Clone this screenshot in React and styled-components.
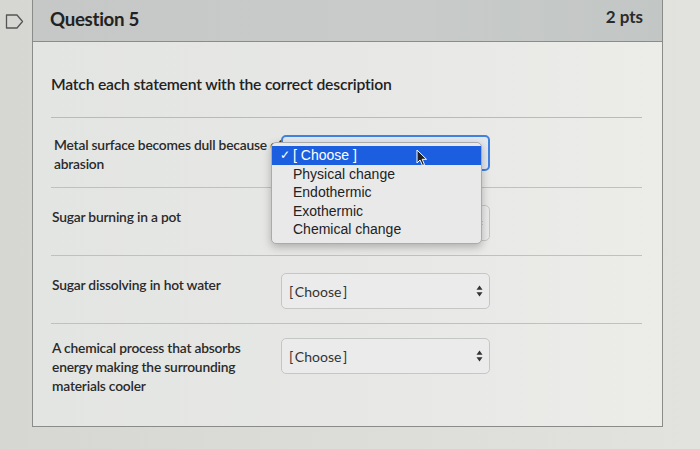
import React from "react";
import styled, { createGlobalStyle } from "styled-components";

const Global = createGlobalStyle`
  html, body { margin: 0; padding: 0; }
  body {
    width: 700px; height: 449px; overflow: hidden;
    background: linear-gradient(90deg, #d6d6d2 0%, #dcdcd9 50%, #e2e2df 100%);
    font-family: Lato, "Open Sans", sans-serif;
    color: #2d3b45;
  }
`;

const Page = styled.div`
  display: flex;
  height: 449px;
`;

const Gutter = styled.div`
  width: 32px;
  flex: none;
  padding-top: 13px;
  padding-left: 5px;
  box-sizing: border-box;
`;

const Card = styled.div`
  width: 631px;
  height: 427px;
  box-sizing: border-box;
  border-left: 1px solid #8a8c8a;
  border-right: 1px solid #8a8c8a;
  border-bottom: 1px solid #8a8c8a;
  background: linear-gradient(90deg, #e3e5e3 0%, #e7e8e6 50%, #ecece9 100%);
  display: flex;
  flex-direction: column;
  position: relative;
`;

const Header = styled.div`
  height: 42px;
  box-sizing: border-box;
  background: linear-gradient(90deg, #c5c8c7 0%, #c8cbca 60%, #c2c6c5 100%);
  border-bottom: 1px solid #8a8c8a;
  display: flex;
  align-items: center;
  justify-content: space-between;
  padding: 0 19px 4px 17px;
`;

const Title = styled.div`
  font-size: 18.7px;
  font-weight: 700;
  color: #222;
  letter-spacing: -0.3px;
`;

const Points = styled.div`
  font-size: 17px;
  font-weight: 700;
  color: #2a2a2a;
  margin-top: -4px;
`;

const Body = styled.div`
  padding: 0 20px 0 18px;
  display: flex;
  flex-direction: column;
`;

const Prompt = styled.div`
  font-size: 15.7px;
  font-weight: 600;
  color: #222;
  padding: 33px 0 24px;
  border-bottom: 1px solid #b9bbb9;
  line-height: 18px;
  letter-spacing: -0.2px;
`;

const Row = styled.div`
  display: flex;
  align-items: flex-start;
  padding: ${p => (p.$last ? "14px 0 0" : "17px 0 14px")};
  border-bottom: ${p => (p.$last ? "none" : "1px solid #bfc1bf")};
`;

const Statement = styled.div`
  width: 230px;
  flex: none;
  font-size: 13.8px;
  font-weight: 600;
  line-height: 19px;
  color: #2a2a2a;
  letter-spacing: -0.2px;
  padding-top: ${p => p.$pt || 0}px;
  padding-left: ${p => p.$pl || 1}px;
  padding-right: 6px;
  box-sizing: border-box;
  white-space: ${p => (p.$nowrap ? "nowrap" : "normal")};
`;

const Select = styled.div`
  width: 209px;
  height: 36px;
  box-sizing: border-box;
  border: ${p => (p.$focus ? "2px solid #3f83e0" : "1px solid #c5c7c5")};
  border-radius: 5px;
  background: ${p => (p.$focus ? "#e4e8ee" : "#eaebea")};
  display: flex;
  align-items: center;
  justify-content: space-between;
  padding: 0 6px 0 7px;
  font-size: 14px;
  color: #333;
  word-spacing: -2px;
`;

const Arrow = () => (
  <svg width="7" height="12" viewBox="0 0 7 12">
    <path d="M3.5 0.5 L6.5 4.8 H0.5 Z" fill="#333" />
    <path d="M3.5 11.5 L6.5 7.2 H0.5 Z" fill="#333" />
  </svg>
);

const Menu = styled.div`
  position: absolute;
  left: 238px;
  top: 142px;
  width: 211px;
  box-sizing: border-box;
  padding: 3px 0 4px;
  background: #e9e9ea;
  border: 1px solid #a9abad;
  border-radius: 5px;
  box-shadow: 0 3px 8px rgba(0,0,0,0.25);
  font-family: "Liberation Sans", Arial, sans-serif;
  font-size: 14px;
  color: #222;
`;

const Option = styled.div`
  height: 18.5px;
  line-height: 18.5px;
  display: flex;
  align-items: center;
  padding-left: 8px;
  background: ${p => (p.$active ? "#1b5fe0" : "transparent")};
  color: ${p => (p.$active ? "#fff" : "#222")};
`;

const Check = styled.span`
  width: 13px;
  display: inline-block;
  font-size: 12px;
`;

const Cursor = styled.svg`
  position: absolute;
  left: 383px;
  top: 149px;
`;

const rows = [
  { text: ["Metal surface becomes dull because of", "abrasion"], focus: true, pl: 3, nowrap: true },
  { text: "Sugar burning in a pot", pt: 2 },
  { text: "Sugar dissolving in hot water", pt: 2 },
  { text: "A chemical process that absorbs energy making the surrounding materials cooler", last: true },
];

const options = ["[ Choose ]", "Physical change", "Endothermic", "Exothermic", "Chemical change"];

export default function App() {
  return (
    <>
      <Global />
      <Page>
        <Gutter>
          <svg width="19" height="15" viewBox="0 0 19 15">
            <path d="M1.5 1 H12 L17.5 7.5 L12 14 H1.5 Z" fill="none" stroke="#555" strokeWidth="1.3" strokeLinejoin="round" />
          </svg>
        </Gutter>
        <Card>
          <Header>
            <Title>Question 5</Title>
            <Points>2 pts</Points>
          </Header>
          <Body>
            <Prompt>Match each statement with the correct description</Prompt>
            {rows.map((r, i) => (
              <Row key={i} $last={r.last}>
                <Statement $pt={r.pt} $pl={r.pl} $nowrap={r.nowrap}>
                  {Array.isArray(r.text)
                    ? r.text.map((t, j) => (
                        <React.Fragment key={j}>
                          {j > 0 && <br />}
                          {t}
                        </React.Fragment>
                      ))
                    : r.text}
                </Statement>
                <Select $focus={r.focus}>
                  <span>[ Choose ]</span>
                  <Arrow />
                </Select>
              </Row>
            ))}
          </Body>
          <Menu>
            {options.map((o, i) => (
              <Option key={o} $active={i === 0}>
                <Check>{i === 0 ? "✓" : ""}</Check>
                {o}
              </Option>
            ))}
          </Menu>
          <Cursor width="12" height="18" viewBox="0 0 12 18">
            <path d="M1 1 L1 14 L4 11 L6.5 16.5 L8.5 15.6 L6.2 10.3 L10.5 10.3 Z" fill="#222" stroke="#fff" strokeWidth="1" />
          </Cursor>
        </Card>
      </Page>
    </>
  );
}
